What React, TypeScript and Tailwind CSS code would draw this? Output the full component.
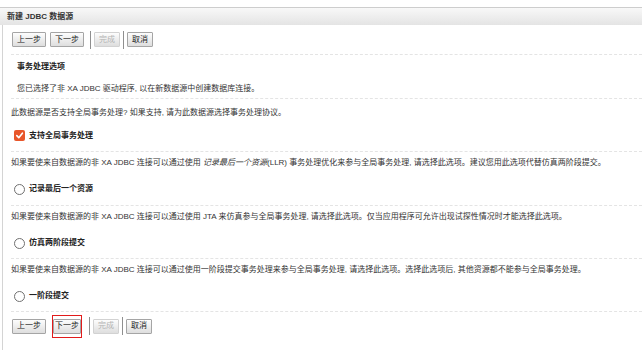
const font = { fontFamily: '"Liberation Sans", "Noto Sans CJK SC", sans-serif' };

function Btn({ label, disabled, narrow }: { label: string; disabled?: boolean; narrow?: boolean }) {
  return (
    <div
      className={
        "flex h-[15px] shrink-0 items-center rounded-[1px] border bg-gradient-to-b from-[#fdfdfd] to-[#dedede] text-[8px] leading-none whitespace-nowrap " +
        (narrow ? "px-[1px] " : "px-[4px] ") +
        (disabled ? "border-[#d2d2d2] text-[#b4b4b4]" : "border-[#a5a5a5] text-[#222]")
      }
    >
      {label}
    </div>
  );
}

function Sep() {
  return <div className="mx-[3px] h-[18px] w-px bg-[#8f8f8f]" />;
}

function Buttons({ highlight }: { highlight?: boolean }) {
  return (
    <div className="flex items-center">
      <Btn label="上一步" />
      {highlight ? (
        <div className="-my-[5px] mr-[4px] ml-[6px] flex h-[23px] w-[30px] items-center justify-center border-[1.5px] border-[#e21b1b]">
          <Btn label="下一步" narrow />
        </div>
      ) : (
        <div className="mr-[3px] ml-[4px]">
          <Btn label="下一步" />
        </div>
      )}
      <Sep />
      <Btn label="完成" disabled />
      <Sep />
      <Btn label="取消" />
    </div>
  );
}

function Dots() {
  return <div className="h-0 border-t border-dashed border-[#e4e4e4]" />;
}

function Radio({ label }: { label: string }) {
  return (
    <div className="flex h-[30px] items-center gap-[4px] pl-[3px]">
      <div className="h-[11px] w-[11px] rounded-full border-[1.5px] border-[#707070] bg-white" />
      <span className="text-[8px] font-bold text-[#222]">{label}</span>
    </div>
  );
}

function Para({ children }: { children: React.ReactNode }) {
  return <div className="h-[22px] pt-[6px] text-[8px] leading-[10px] whitespace-nowrap text-[#333]">{children}</div>;
}

export default function App() {
  return (
    <div className="h-[350px] w-[642px] overflow-hidden bg-white pt-[7px]" style={font}>
      <div className="flex h-[18px] items-center border-t-[1.5px] border-[#cdcdcd] bg-gradient-to-b from-[#f8f8f8] to-[#e4e4e4] pl-[7px] text-[8px] font-bold text-[#333]">
        新建 JDBC 数据源
      </div>
      <div className="ml-[2px] h-[330px] border-l border-[#d4d4d4] pl-[8px]">
        <div className="flex h-[29px] items-center pl-[1px]">
          <Buttons />
        </div>
        <Dots />
        <div className="pl-[6px]">
          <div className="flex h-[24px] items-center text-[8px] font-bold text-[#222]">事务处理选项</div>
          <div className="flex h-[19px] items-center text-[8px] text-[#333]">
            您已选择了非 XA JDBC 驱动程序, 以在新数据源中创建数据库连接。
          </div>
        </div>
        <Dots />
        <div className="h-[28px] pt-[9px] text-[8px] leading-[10px] text-[#333]">
          此数据源是否支持全局事务处理? 如果支持, 请为此数据源选择事务处理协议。
        </div>
        <div className="flex h-[24px] items-start gap-[4px] pt-[3px] pl-[3px]">
          <div className="flex h-[11px] w-[11px] items-center justify-center rounded-[2px] bg-[#e8562a]">
            <svg width="9" height="9" viewBox="0 0 10 10">
              <path d="M2 5.2 L4.2 7.4 L8.2 2.4" fill="none" stroke="#fff" strokeWidth="1.8" strokeLinecap="round" strokeLinejoin="round" />
            </svg>
          </div>
          <span className="text-[8px] leading-[11px] font-bold text-[#222]">支持全局事务处理</span>
        </div>
        <Dots />
        <Para>
          如果要使来自数据源的非 XA JDBC 连接可以通过使用 <i>记录最后一个资源</i>(LLR) 事务处理优化来参与全局事务处理, 请选择此选项。建议您用此选项代替仿真两阶段提交。
        </Para>
        <div className="h-[31px]">
          <Radio label="记录最后一个资源" />
        </div>
        <Dots />
        <Para>
          如果要使来自数据源的非 XA JDBC 连接可以通过使用 JTA 来仿真参与全局事务处理, 请选择此选项。仅当应用程序可允许出现试探性情况时才能选择此选项。
        </Para>
        <Radio label="仿真两阶段提交" />
        <Dots />
        <Para>
          如果要使来自数据源的非 XA JDBC 连接可以通过使用一阶段提交事务处理来参与全局事务处理, 请选择此选项。选择此选项后, 其他资源都不能参与全局事务处理。
        </Para>
        <Radio label="一阶段提交" />
        <Dots />
        <div className="flex h-[28px] items-center pl-[1px]">
          <Buttons highlight />
        </div>
      </div>
    </div>
  );
}
